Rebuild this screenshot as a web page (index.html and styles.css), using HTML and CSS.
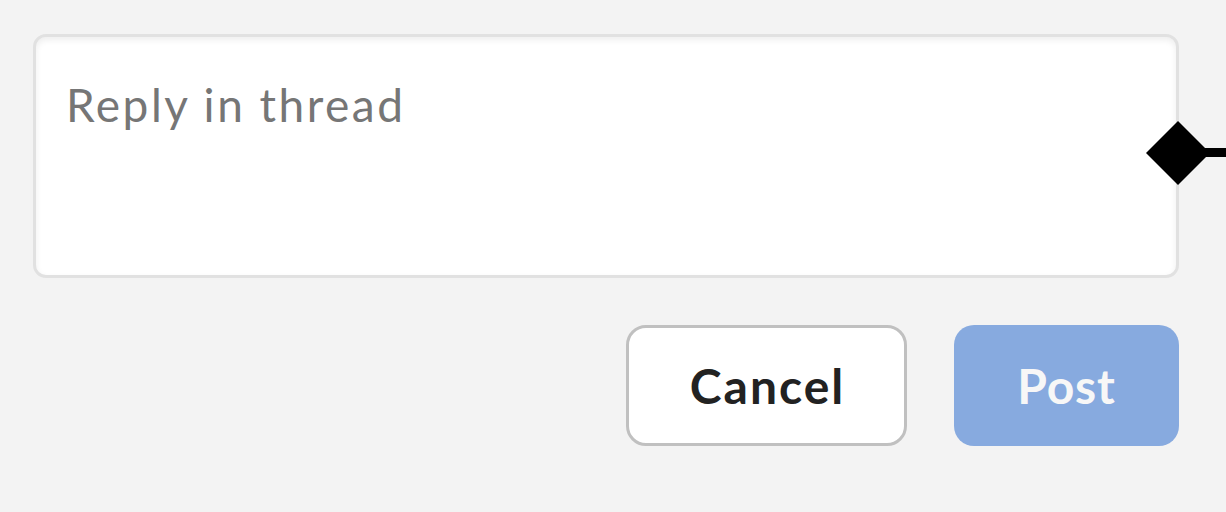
FILE: index.html
```html
<!DOCTYPE html>
<html>
<head>
<meta charset="utf-8">
<link rel="stylesheet" href="styles.css">
</head>
<body>
<div class="composer">
  <div class="reply-box">
    <div class="placeholder">Reply in thread</div>
  </div>
  <div class="actions">
    <button class="btn btn-cancel">Cancel</button>
    <button class="btn btn-post">Post</button>
  </div>
  <svg class="handle" width="82" height="66" viewBox="0 0 82 66">
    <polygon points="0,33 32,1 64,33 32,65" fill="#000"/>
    <rect x="50" y="28" width="32" height="9" fill="#000"/>
  </svg>
</div>
</body>
</html>
```

FILE: styles.css
```css
html, body {
  margin: 0;
  padding: 0;
  background: #f3f3f3;
  font-family: Lato, "Liberation Sans", sans-serif;
}
.composer {
  position: relative;
  padding: 34px 47px 0 33px;
  height: 512px;
  box-sizing: border-box;
}
.reply-box {
  height: 244px;
  box-sizing: border-box;
  background: #fff;
  border: 3px solid #e1e1e1;
  border-radius: 13px;
  box-shadow: inset 0 3px 6px rgba(0, 0, 0, 0.07);
  padding: 40px 30px 0 30px;
}
.placeholder {
  font-size: 46px;
  line-height: 56px;
  letter-spacing: 2.5px;
  color: #767676;
}
.actions {
  display: flex;
  justify-content: flex-end;
  gap: 47px;
  margin-top: 47px;
}
.btn {
  height: 121px;
  box-sizing: border-box;
  border-radius: 20px;
  font-family: Lato, "Liberation Sans", sans-serif;
  font-weight: 700;
  font-size: 48px;
  padding: 0;
}
.btn-cancel {
  width: 281px;
  background: #fff;
  border: 3px solid #c0c0c0;
  color: #222;
  letter-spacing: 2px;
  text-indent: 2px;
}
.btn-post {
  width: 225px;
  background: #87aadf;
  border: none;
  color: #f7f7f7;
  letter-spacing: 0.8px;
}
.handle {
  position: absolute;
  left: 1146px;
  top: 120px;
}
```
